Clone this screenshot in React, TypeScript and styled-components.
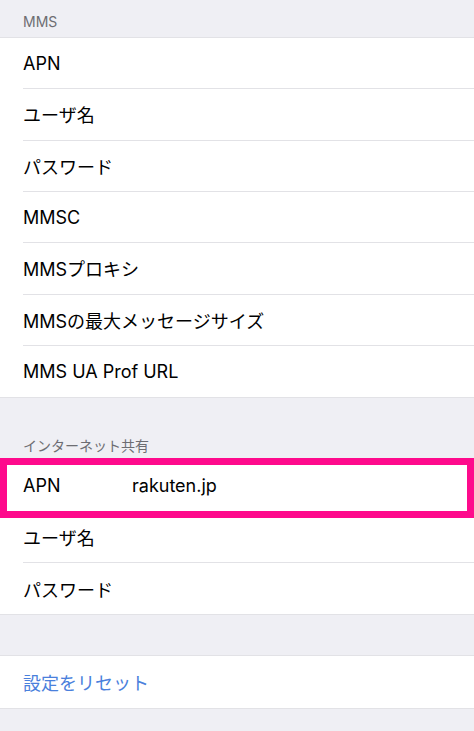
import React from "react";
import styled, { createGlobalStyle } from "styled-components";

const GlobalStyle = createGlobalStyle`
  * { box-sizing: border-box; }
  html, body {
    margin: 0;
    padding: 0;
    background: #efeff4;
    font-family: "Inter", "Noto Sans CJK JP", sans-serif;
    -webkit-font-smoothing: antialiased;
  }
`;

interface Row {
  label: string;
  value?: string;
}

const mmsRows: Row[] = [
  { label: "APN" },
  { label: "ユーザ名" },
  { label: "パスワード" },
  { label: "MMSC" },
  { label: "MMSプロキシ" },
  { label: "MMSの最大メッセージサイズ" },
  { label: "MMS UA Prof URL" },
];

const App: React.FC = () => {
  return (
    <Page>
      <GlobalStyle />
      <SectionHeader $height={37} $pad={7}>MMS</SectionHeader>
      <Group>
        {mmsRows.map((row) => (
          <Cell key={row.label}>
            <CellInner>
              <Label>{row.label}</Label>
            </CellInner>
          </Cell>
        ))}
      </Group>

      <SectionHeader $height={61} $pad={5}>インターネット共有</SectionHeader>
      <Group>
        <Cell>
          <CellInner>
            <Label $fixed>APN</Label>
            <Value>rakuten.jp</Value>
          </CellInner>
          <Highlight />
        </Cell>
        <Cell>
          <CellInner>
            <Label>ユーザ名</Label>
          </CellInner>
        </Cell>
        <Cell>
          <CellInner>
            <Label>パスワード</Label>
          </CellInner>
        </Cell>
      </Group>

      <SectionHeader $height={40} />
      <Group>
        <Cell>
          <CellInner>
            <LinkLabel>設定をリセット</LinkLabel>
          </CellInner>
        </Cell>
      </Group>
      <SectionHeader $height={40} />
    </Page>
  );
};

export default App;

const Page = styled.div`
  width: 474px;
  min-height: 731px;
  background: #efeff4;
  overflow: hidden;
`;

const SectionHeader = styled.div<{ $height: number; $pad?: number }>`
  height: ${(p) => p.$height}px;
  display: flex;
  align-items: flex-end;
  padding: 0 23px ${(p) => p.$pad ?? 7}px;
  color: #6d6d72;
  font-size: 14px;
  line-height: 17px;
`;

const Group = styled.div`
  background: #fff;
  border-top: 1px solid #e2e2e6;
  border-bottom: 1px solid #e2e2e6;
`;

const Cell = styled.div`
  position: relative;
  height: 51.33px;
  padding-left: 23px;

  &:last-child > div {
    border-bottom: none;
  }
`;

const CellInner = styled.div`
  height: 100%;
  display: flex;
  align-items: center;
  border-bottom: 1px solid #e2e2e6;
`;

const Label = styled.span<{ $fixed?: boolean }>`
  color: #000;
  font-size: 18px;
  width: ${(p) => (p.$fixed ? "109px" : "auto")};
  flex-shrink: 0;
`;

const Value = styled.span`
  color: #000;
  font-size: 18px;
`;

const LinkLabel = styled.span`
  color: #4a80dc;
  font-size: 18px;
`;

const Highlight = styled.div`
  position: absolute;
  top: -2px;
  bottom: -6px;
  left: 0;
  right: 0;
  border: 7px solid #fe0a8c;
  pointer-events: none;
`;
